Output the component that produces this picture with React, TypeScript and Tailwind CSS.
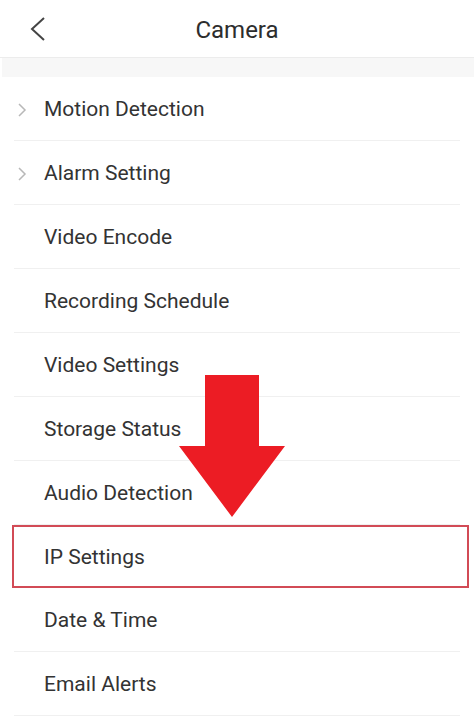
const items = [
  { label: "Motion Detection", arrow: true },
  { label: "Alarm Setting", arrow: true },
  { label: "Video Encode" },
  { label: "Recording Schedule" },
  { label: "Video Settings" },
  { label: "Storage Status" },
  { label: "Audio Detection" },
  { label: "IP Settings", marked: true },
  { label: "Date & Time" },
  { label: "Email Alerts" },
];

export default function App() {
  return (
    <div className="relative w-[474px] h-[719px] overflow-hidden bg-white font-['Roboto',sans-serif] text-[#333333]">
      {/* Header */}
      <header className="relative flex items-center justify-center h-[58px] border-b border-[#ececec]">
        <button className="absolute left-[30px] top-[16px]">
          <svg width="16" height="26" viewBox="0 0 16 26" fill="none">
            <polyline points="14,2 2,13 14,24" stroke="#444444" strokeWidth="2" strokeLinejoin="miter" />
          </svg>
        </button>
        <h1 className="text-[24px] leading-none text-[#2d2d2d] pt-[2px]">Camera</h1>
      </header>

      <div className="ml-[2px] h-[19px] bg-[#f7f7f7]" />

      {/* Settings list */}
      <ul>
        {items.map((item) =>
          item.marked ? (
            <li
              key={item.label}
              className="flex items-center h-[63px] ml-[12px] mr-[5px] border-2 border-[#d24b56]"
            >
              <span className="pl-[30px] pt-[3px] text-[21px]">{item.label}</span>
            </li>
          ) : (
            <li
              key={item.label}
              className="relative flex items-center h-[64px] mx-[14px] border-b border-[#f0f0f0]"
            >
              {item.arrow && (
                <svg className="absolute left-[3px] top-[26px]" width="10" height="14" viewBox="0 0 10 14" fill="none">
                  <polyline points="2,1 8,7 2,13" stroke="#b8b8b8" strokeWidth="1.5" />
                </svg>
              )}
              <span className="pl-[30px] pt-[3px] text-[21px]">{item.label}</span>
            </li>
          )
        )}
      </ul>

      {/* Red pointer arrow */}
      <svg className="absolute left-[179px] top-[375px]" width="106" height="142" viewBox="0 0 106 142">
        <polygon points="26,0 80,0 80,71 106,71 53,142 0,71 26,71" fill="#ec1c24" />
      </svg>
    </div>
  );
}
